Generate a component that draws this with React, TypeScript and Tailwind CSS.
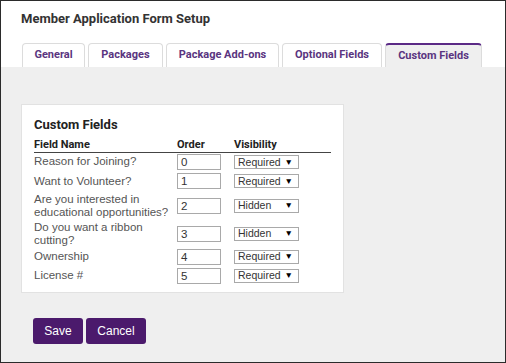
import React from "react";

const tabs = [
  { label: "General", w: "w-[63px]" },
  { label: "Packages", w: "w-[75px]" },
  { label: "Package Add-ons", w: "w-[113px]" },
  { label: "Optional Fields", w: "w-[100px]" },
  { label: "Custom Fields", w: "w-[97px]" },
];

const rows = [
  { name: "Reason for Joining?", order: "0", vis: "Required", h: "h-[19px]" },
  { name: "Want to Volunteer?", order: "1", vis: "Required", h: "h-[20px]" },
  { name: "Are you interested in educational opportunities?", order: "2", vis: "Hidden", h: "h-[29px]" },
  { name: "Do you want a ribbon cutting?", order: "3", vis: "Hidden", h: "h-[27px]" },
  { name: "Ownership", order: "4", vis: "Required", h: "h-[19px]" },
  { name: "License #", order: "5", vis: "Required", h: "h-[19px]" },
];

function FakeSelect({ value }: { value: string }) {
  return (
    <div className="w-[65px] h-[14px] border border-[#a9a9a9] bg-white flex items-center justify-between pl-[3px] pr-[5px] text-[10.5px] leading-none text-[#333]">
      <span>{value}</span>
      <span className="text-[8.5px] text-black">▼</span>
    </div>
  );
}

export default function App() {
  return (
    <div className="w-[506px] h-[363px] border border-[#2b2b2b] bg-white flex flex-col font-['Roboto',sans-serif]">
      <div className="pl-5 pt-[10px] h-[42px] text-[13px] leading-[16px] font-bold text-[#333]">
        Member Application Form Setup
      </div>

      <div className="flex gap-[3px] pl-[21px] h-[24px]">
        {tabs.map((t, i) => {
          const active = i === tabs.length - 1;
          return (
            <div
              key={t.label}
              className={`${t.w} whitespace-nowrap flex items-center justify-center rounded-t-[4px] text-[11px] font-bold text-[#5a3580] ${
                active
                  ? "bg-[#efefef] border-t-2 border-t-[#5b2a86] border-x border-x-[#dcdcdc]"
                  : "bg-white border border-b-0 border-[#dcdcdc]"
              }`}
            >
              {t.label}
            </div>
          );
        })}
      </div>

      <div className="flex-1 bg-[#efefef] pt-[37px]">
        <div className="ml-5 w-[323px] h-[189px] bg-white border border-[#e2e2e2] px-3 pt-[12px]">
          <div className="text-[13px] leading-[16px] font-bold text-[#222]">Custom Fields</div>
          <table className="w-[297px] border-collapse mt-[4px] font-['Liberation_Sans',Arial,sans-serif]">
            <thead>
              <tr className="border-b border-[#444] h-[15px]">
                <th className="w-[143px] text-left align-bottom font-['Roboto',sans-serif] font-bold text-[11px] leading-[13px] text-[#222] pb-[1px]">Field Name</th>
                <th className="w-[57px] text-left align-bottom font-['Roboto',sans-serif] font-bold text-[11px] leading-[13px] text-[#222] pb-[1px]">Order</th>
                <th className="text-left align-bottom font-['Roboto',sans-serif] font-bold text-[11px] leading-[13px] text-[#222] pb-[1px]">Visibility</th>
              </tr>
            </thead>
            <tbody>
              {rows.map((r) => (
                <tr key={r.order} className={r.h}>
                  <td className="align-middle text-[11.5px] leading-[13px] text-[#555] pr-2">{r.name}</td>
                  <td className="align-middle">
                    <div className="w-[44px] h-[16px] border border-[#a9a9a9] bg-white pl-[3px] text-[11.5px] leading-[14px] text-[#333]">
                      {r.order}
                    </div>
                  </td>
                  <td className="align-middle">
                    <FakeSelect value={r.vis} />
                  </td>
                </tr>
              ))}
            </tbody>
          </table>
        </div>

        <div className="flex gap-[3px] ml-8 mt-[25px]">
          <button className="w-[50px] h-[26px] rounded-[3px] bg-[#4b1a6c] text-white text-[12px] font-['Liberation_Sans',Arial,sans-serif]">
            Save
          </button>
          <button className="w-[60px] h-[26px] rounded-[3px] bg-[#4b1a6c] text-white text-[12px] font-['Liberation_Sans',Arial,sans-serif]">
            Cancel
          </button>
        </div>
      </div>
    </div>
  );
}
